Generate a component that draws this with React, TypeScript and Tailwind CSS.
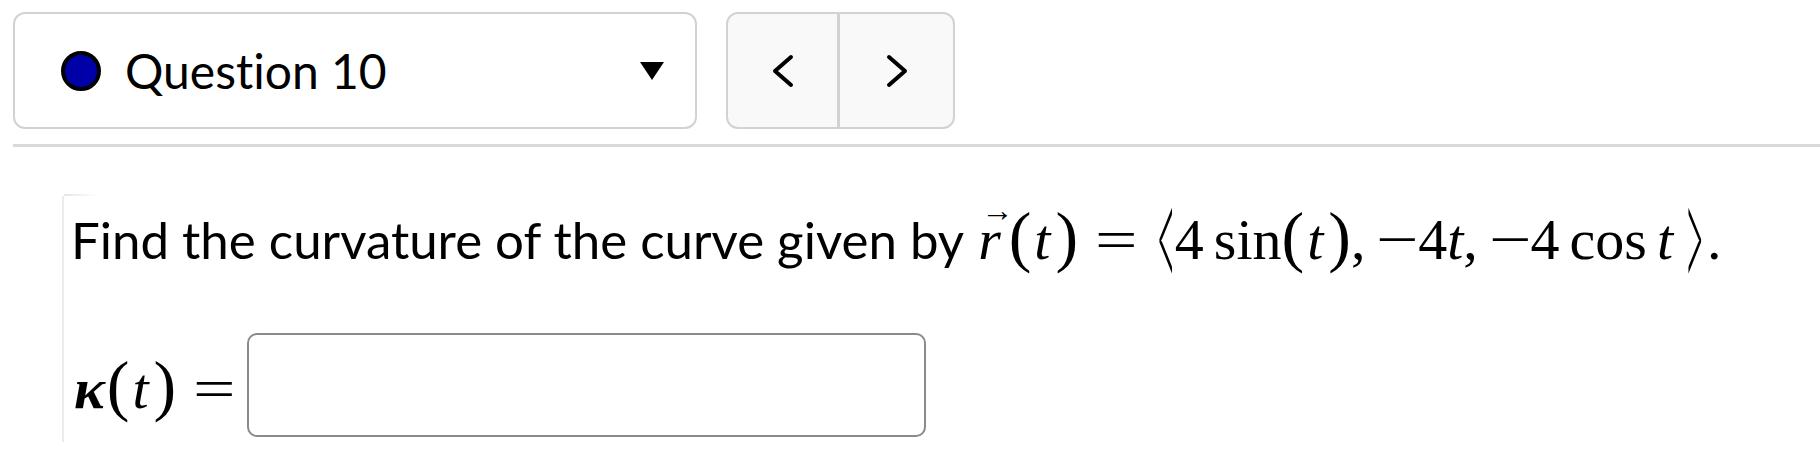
import React from "react";

const Chevron = ({ dir }: { dir: "left" | "right" }) => (
  <svg width="22" height="34" viewBox="0 0 22 34" fill="none">
    <polyline
      points={dir === "left" ? "19,3 3,17 19,31" : "3,3 19,17 3,31"}
      stroke="#000"
      strokeWidth="4"
      strokeLinecap="round"
      strokeLinejoin="round"
    />
  </svg>
);

const Var = ({ children }: { children: React.ReactNode }) => <span className="italic">{children}</span>;
const Paren = ({ children }: { children: React.ReactNode }) => <span className="text-[68px] leading-none">{children}</span>;
// tall thin angle bracket
const Angle = ({ children }: { children: React.ReactNode }) => (
  <span className="inline-block w-[18px] text-center font-['Lato',sans-serif] font-light text-[56px] leading-none [transform:translateY(-4px)_scale(0.6,2.9)]">
    {children}
  </span>
);
// CM-style wide operators
const Wide = ({ children }: { children: React.ReactNode }) => (
  <span className="inline-block scale-x-[1.3]">{children}</span>
);

export default function App() {
  return (
    <div className="w-[1820px] h-[462px] bg-white overflow-hidden font-['Lato',sans-serif] text-black [font-variant-ligatures:none]">
      {/* Question selector + nav */}
      <div className="flex gap-[29px] pl-[13px] pt-[12px]">
        <div className="w-[684px] h-[117px] border-2 border-[#d2d2d2] rounded-[12px] flex items-center pl-[46px] pr-[31px]">
          <span className="w-[40px] h-[40px] rounded-full bg-[#0000a8] border-[4px] border-black shrink-0"></span>
          <span className="ml-[24px] text-[48px] leading-none">Question 10</span>
          <span className="ml-auto w-0 h-0 border-l-[12px] border-r-[12px] border-t-[18px] border-l-transparent border-r-transparent border-t-black"></span>
        </div>
        <div className="w-[229px] h-[117px] border-2 border-[#d2d2d2] rounded-[12px] bg-[#f9f9f9] flex overflow-hidden">
          <button className="w-[112px] h-full flex items-center justify-center border-r-[3px] border-[#d2d2d2]">
            <Chevron dir="left" />
          </button>
          <button className="flex-1 h-full flex items-center justify-center">
            <Chevron dir="right" />
          </button>
        </div>
      </div>

      <div className="mt-[15px] ml-[13px] h-[3px] bg-[#d9d9d9]"></div>

      {/* Question body */}
      <div className="mt-[49px] ml-[62px] h-[246px] border-l-2 border-[#ececec] pl-[7px] relative">
        <div className="absolute -top-[2px] left-0 w-[34px] h-[2px] bg-gradient-to-r from-[#e6e6e6] to-transparent"></div>
        <p className="text-[51px] leading-none pt-[6px] flex items-baseline">
          <span>Find the curvature of the curve given by</span>
          <span className="ml-[14px] font-['Liberation_Serif',serif] text-[58px] flex items-baseline">
            <span className="relative italic">
              r
              <span className="absolute not-italic left-[3px] -top-[17px] text-[32px]">→</span>
            </span>
            <span className="ml-[8px]"><Paren>(</Paren></span>
            <span className="ml-[3px]"><Var>t</Var></span>
            <span className="ml-[5px]"><Paren>)</Paren></span>
            <span className="ml-[22px] mr-[20px]"><Wide>=</Wide></span>
            <Angle>&lt;</Angle>
            <span className="ml-[4px]">4</span>
            <span className="ml-[10px]">sin</span>
            <Paren>(</Paren>
            <span className="ml-[3px]"><Var>t</Var></span>
            <span className="ml-[5px]"><Paren>)</Paren></span>
            <span>,</span>
            <span className="ml-[16px]"><Wide>−</Wide></span>
            <span className="ml-[4px]">4</span>
            <Var>t</Var>
            <span>,</span>
            <span className="ml-[16px]"><Wide>−</Wide></span>
            <span className="ml-[4px]">4</span>
            <span className="ml-[10px]">cos</span>
            <span className="ml-[10px]"><Var>t</Var></span>
            <span className="ml-[8px]"><Angle>&gt;</Angle></span>
            <span className="ml-[8px]">.</span>
          </span>
        </p>
        <div className="mt-[63px] flex items-center">
          <span className="font-['Liberation_Serif',serif] text-[58px] leading-none flex items-baseline">
            <span className="ml-[3px] italic font-bold">κ</span>
            <span className="ml-[2px]"><Paren>(</Paren></span>
            <span className="ml-[3px]"><Var>t</Var></span>
            <span className="ml-[5px]"><Paren>)</Paren></span>
            <span className="ml-[22px] mr-[16px]"><Wide>=</Wide></span>
          </span>
          <input
            type="text"
            className="w-[679px] h-[104px] border-2 border-[#8a8a8a] rounded-[10px] bg-white outline-none"
          />
        </div>
      </div>
    </div>
  );
}
